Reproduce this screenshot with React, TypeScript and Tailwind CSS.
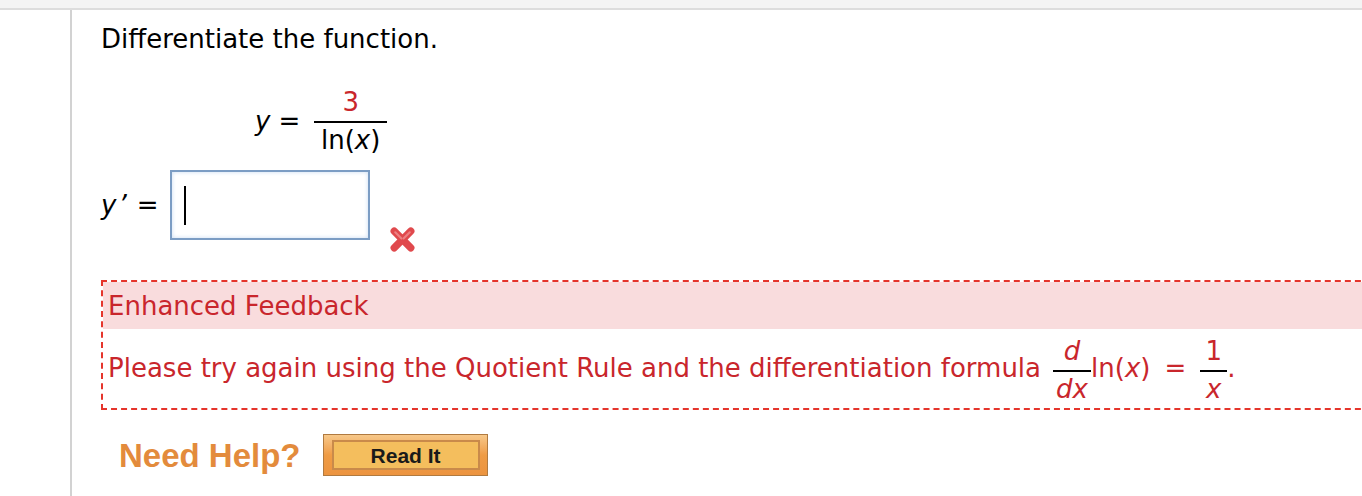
import React from "react";

const red = "text-[#c9262c]";

function Frac({ top, bottom, width, pad = "" }: { top: React.ReactNode; bottom: React.ReactNode; width: string; pad?: string }) {
  return (
    <span className={`inline-flex flex-col items-center align-middle ${width} ${pad}`}>
      <span className="h-[28px] leading-[28px] mb-[5px]">{top}</span>
      <span className="block h-[2px] w-full bg-black" />
      <span className="h-[28px] leading-[28px] mt-[3px]">{bottom}</span>
    </span>
  );
}

export default function App() {
  return (
    <div className="w-[1362px] h-[496px] overflow-hidden bg-white font-['DejaVu_Sans',Verdana,sans-serif] text-[26px] text-black">
      {/* top strip */}
      <div className="h-[10px] bg-[#f4f4f4] border-b-2 border-[#dddddd]" />

      <div className="flex h-[486px]">
        <div className="w-[70px] shrink-0" />
        <div className="flex-1 border-l-2 border-[#d2d2d2] pl-[29px] pt-[13px]">
          <p className="leading-[32px]">Differentiate the function.</p>

          {/* equation */}
          <div className="mt-[33px] ml-[154px] flex items-center">
            <span className="italic">y</span>
            <span className="ml-[8px]">=</span>
            <span className="ml-[14px]">
              <Frac width="w-[73px]" top={<span className={red}>3</span>} bottom={<span>ln(<span className="italic">x</span>)</span>} />
            </span>
          </div>

          {/* answer row */}
          <div className="mt-[16px] flex items-start">
            <div className="h-[70px] flex items-center">
              <span className="italic">y</span>
              <span className="italic ml-[2px]">’</span>
              <span className="ml-[10px]">=</span>
            </div>
            <div className="ml-[12px] w-[200px] h-[70px] border-2 border-[#7c9dc4] shadow-[inset_0_0_4px_#c9dcf3] flex items-center pl-[12px]">
              <span className="block w-[2px] h-[39px] bg-black" />
            </div>
            <svg className="ml-[19px] mt-[56px]" width="27" height="27" viewBox="0 0 26 26">
              <defs>
                <filter id="bl" x="-20%" y="-20%" width="140%" height="140%">
                  <feGaussianBlur stdDeviation="0.7" />
                </filter>
              </defs>
              <g filter="url(#bl)" stroke="#e04a4d" strokeWidth="7" strokeLinecap="round">
                <path d="M5 5 L21 21" />
                <path d="M21 5 L5 21" />
              </g>
              <g filter="url(#bl)" stroke="#f29a9a" strokeWidth="2" strokeLinecap="round" opacity="0.7">
                <path d="M6 6 L12 12" />
                <path d="M20 6 L14 12" />
              </g>
            </svg>
          </div>

          {/* feedback */}
          <div className={`mt-[27px] w-[1300px] border-2 border-dashed border-[#e5352c] ${red}`}>
            <div className="h-[47px] bg-[#f9dcdd] flex items-center pl-[5px] leading-none">Enhanced Feedback</div>
            <div className="h-[79px] flex items-center pl-[5px] whitespace-nowrap">
              <span>Please try again using the Quotient Rule and the differentiation formula</span>
              <span className="ml-[12px]">
                <Frac pad="pt-[3px]" width="w-[38px]" top={<span className="italic">d</span>} bottom={<span className="italic">dx</span>} />
              </span>
              <span>ln(<span className="italic">x</span>)</span>
              <span className="ml-[14px]">=</span>
              <span className="ml-[14px]">
                <Frac pad="pt-[3px]" width="w-[27px]" top="1" bottom={<span className="italic">x</span>} />
              </span>
              <span>.</span>
            </div>
          </div>

          {/* need help */}
          <div className="mt-[24px] flex items-center font-['Liberation_Sans',Arial,sans-serif]">
            <span className="ml-[18px] text-[33px] font-bold text-[#e38b3c] leading-none">Need Help?</span>
            <button className="ml-[22px] w-[165px] h-[42px] border border-[#b07a40] bg-gradient-to-b from-[#f7c889] via-[#ef9c45] to-[#ec9440] p-[5px_7px_5px_8px]">
              <span className="flex items-center justify-center w-full h-full border-2 border-[#c98a4a] bg-[#f4be5d] text-[21px] font-bold text-[#1a1a1a] leading-none">
                Read It
              </span>
            </button>
          </div>
        </div>
      </div>
    </div>
  );
}
